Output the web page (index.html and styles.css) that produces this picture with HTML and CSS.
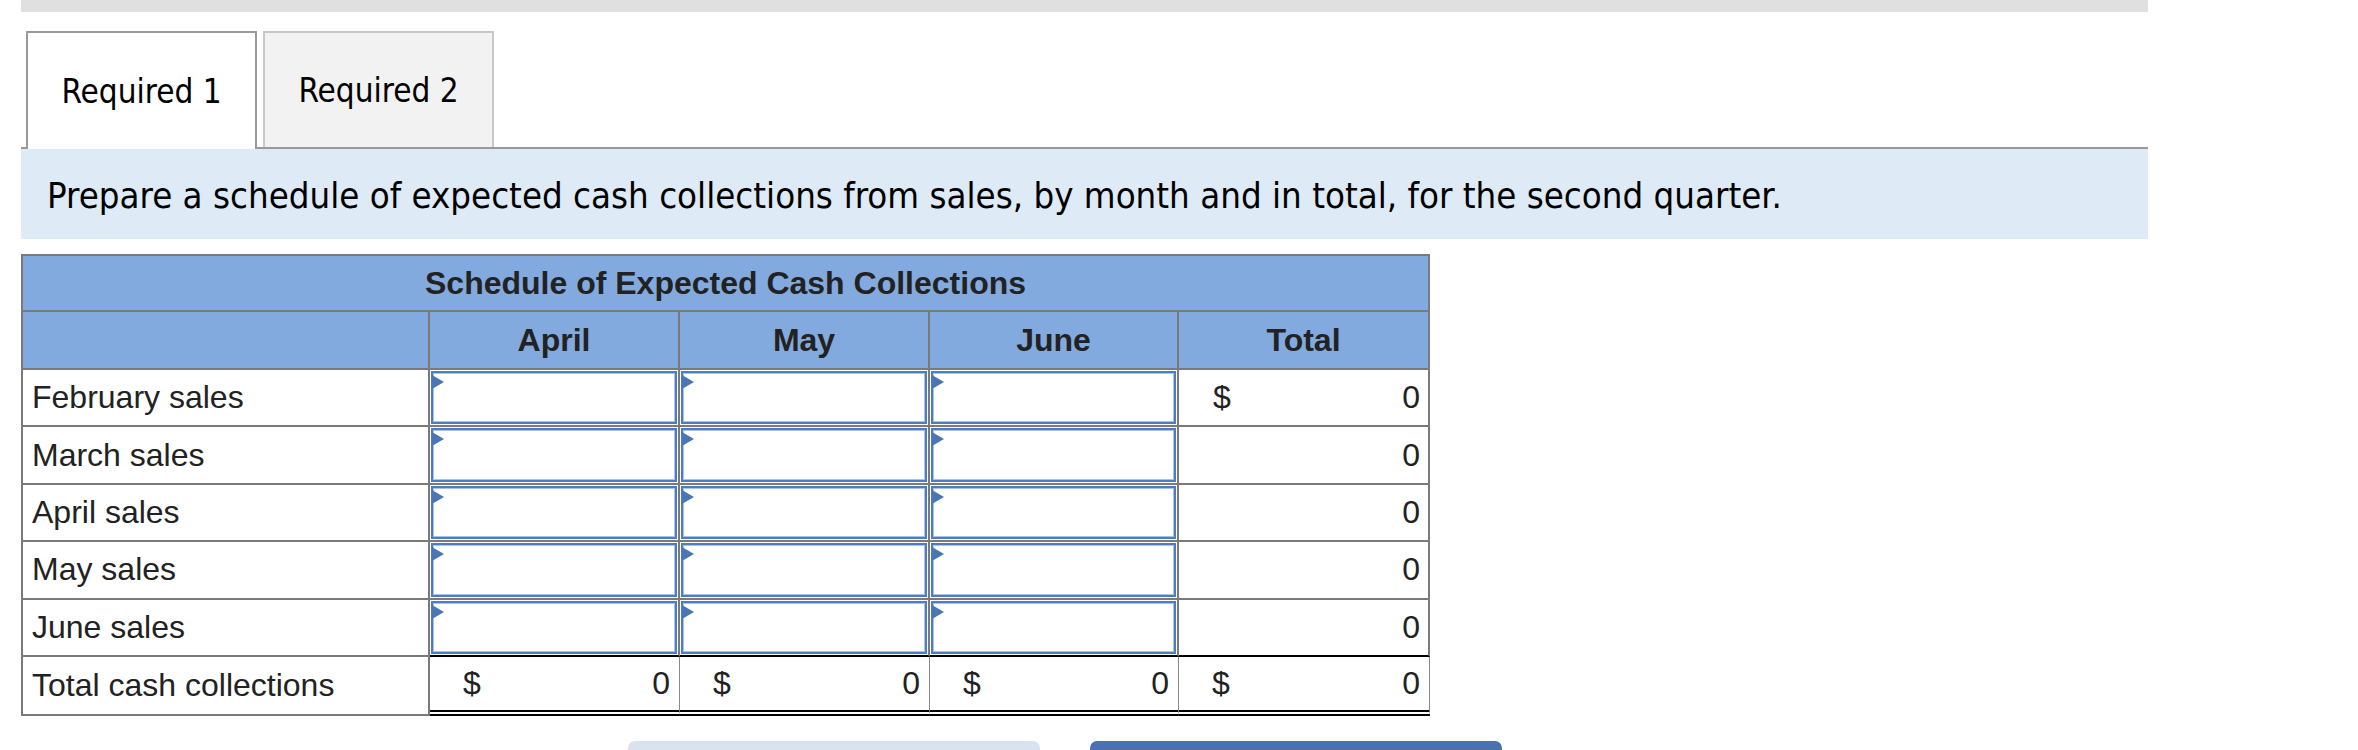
FILE: index.html
```html
<!DOCTYPE html>
<html lang="en">
<head>
<meta charset="utf-8">
<title>Required 1</title>
<link rel="stylesheet" href="styles.css">
</head>
<body>
<div class="page">
  <div class="topbar"></div>
  <div class="tabs">
    <div class="tab active">Required 1</div>
    <div class="tab">Required 2</div>
  </div>
  <div class="prompt">Prepare a schedule of expected cash collections from sales, by month and in total, for the second quarter.</div>

  <div class="sched">
    <div class="cell title">Schedule of Expected Cash Collections</div>

    <div class="cell head"></div>
    <div class="cell head">April</div>
    <div class="cell head">May</div>
    <div class="cell head">June</div>
    <div class="cell head">Total</div>

    <div class="cell label">February sales</div>
    <div class="cell entry num"><div class="field"></div></div>
    <div class="cell entry num"><div class="field"></div></div>
    <div class="cell entry num"><div class="field"></div></div>
    <div class="cell amt num"><span>$</span><span>0</span></div>

    <div class="cell label">March sales</div>
    <div class="cell entry num"><div class="field"></div></div>
    <div class="cell entry num"><div class="field"></div></div>
    <div class="cell entry num"><div class="field"></div></div>
    <div class="cell amt num"><span></span><span>0</span></div>

    <div class="cell label">April sales</div>
    <div class="cell entry num"><div class="field"></div></div>
    <div class="cell entry num"><div class="field"></div></div>
    <div class="cell entry num"><div class="field"></div></div>
    <div class="cell amt num"><span></span><span>0</span></div>

    <div class="cell label">May sales</div>
    <div class="cell entry num"><div class="field"></div></div>
    <div class="cell entry num"><div class="field"></div></div>
    <div class="cell entry num"><div class="field"></div></div>
    <div class="cell amt num"><span></span><span>0</span></div>

    <div class="cell label">June sales</div>
    <div class="cell entry num pre-total"><div class="field"></div></div>
    <div class="cell entry num pre-total"><div class="field"></div></div>
    <div class="cell entry num pre-total"><div class="field"></div></div>
    <div class="cell amt num pre-total"><span></span><span>0</span></div>

    <div class="cell label total-label">Total cash collections</div>
    <div class="cell amt num total"><span>$</span><span>0</span></div>
    <div class="cell amt num total"><span>$</span><span>0</span></div>
    <div class="cell amt num total"><span>$</span><span>0</span></div>
    <div class="cell amt num total"><span>$</span><span>0</span></div>
  </div>

  <div class="nav">
    <button class="btn prev" type="button" aria-label="Required 1"></button>
    <button class="btn next" type="button" aria-label="Required 2"></button>
  </div>
</div>
</body>
</html>
```

FILE: styles.css
```css
html, body {
  margin: 0;
  padding: 0;
  background: #ffffff;
  overflow: hidden;
}

.page {
  padding-left: 21px;
  width: 2127px;
}

.topbar {
  height: 12px;
  background: #e0e0e0;
}

.tabs {
  display: flex;
  align-items: flex-start;
  gap: 6px;
  margin-top: 19px;
  padding-left: 5px;
  height: 116px;
  border-bottom: 2px solid #999999;
}

.tab {
  box-sizing: border-box;
  width: 231px;
  height: 116px;
  border: 2px solid #c8c8c8;
  border-bottom: 0;
  background: #f2f2f2;
  display: flex;
  align-items: center;
  justify-content: center;
  font-family: "DejaVu Sans Condensed", "DejaVu Sans", sans-serif;
  font-stretch: condensed;
  font-size: 33px;
  color: #000000;
}

.tab.active {
  height: 118px;
  background: #ffffff;
  border-color: #999999;
}

.prompt {
  box-sizing: border-box;
  height: 90px;
  background: #deebf7;
  display: flex;
  align-items: center;
  padding-left: 26px;
  padding-top: 2px;
  font-family: "DejaVu Sans Condensed", "DejaVu Sans", sans-serif;
  font-stretch: condensed;
  font-size: 36.3px;
  color: #000000;
  white-space: nowrap;
}

.sched {
  box-sizing: border-box;
  margin-top: 15px;
  width: 1409px;
  display: grid;
  grid-template-columns: 407px 250px 250px 249px 251px;
  grid-template-rows: 56px 58px repeat(5, 57.4px) 59px;
  border-top: 2px solid #7a7a7a;
  border-left: 2px solid #7a7a7a;
  font-family: "Liberation Sans", Arial, sans-serif;
  font-size: 32px;
  color: #222222;
}

.cell {
  box-sizing: border-box;
  border-right: 2px solid #7a7a7a;
  border-bottom: 2px solid #7a7a7a;
  display: flex;
  align-items: center;
  min-width: 0;
}

.title {
  grid-column: 1 / -1;
  justify-content: center;
  background: #82aade;
  font-weight: bold;
}

.head {
  justify-content: center;
  background: #82aade;
  font-weight: bold;
}

.label {
  padding-left: 9px;
}

.entry {
  padding: 1px;
  align-items: stretch;
}

.field {
  position: relative;
  flex: 1;
  box-sizing: border-box;
  background: #ffffff;
  border: 2px solid #4d7cc0;
  box-shadow: inset 0 0 0 1px #a9c3e8;
}

.field::before {
  content: "";
  position: absolute;
  left: -1px;
  top: 2px;
  width: 0;
  height: 0;
  border-left: 12px solid #4a76b5;
  border-top: 7.5px solid transparent;
  border-bottom: 7.5px solid transparent;
}

.amt {
  justify-content: space-between;
  padding: 0 8px 0 34px;
}

.pre-total {
  border-bottom-color: #000000;
}

.total {
  border-bottom: 6px double #000000;
  border-right: 1px solid #8a8a8a;
  padding-left: 33px;
  padding-right: 9px;
}

.nav {
  display: flex;
  justify-content: center;
  gap: 50px;
  width: 2087px;
  margin-top: 25px;
}

.btn {
  width: 412px;
  height: 100px;
  border: 0;
  border-radius: 7px;
  padding: 0;
}

.prev {
  background: #d9e3ef;
}

.next {
  background: #4a72b0;
}
```
